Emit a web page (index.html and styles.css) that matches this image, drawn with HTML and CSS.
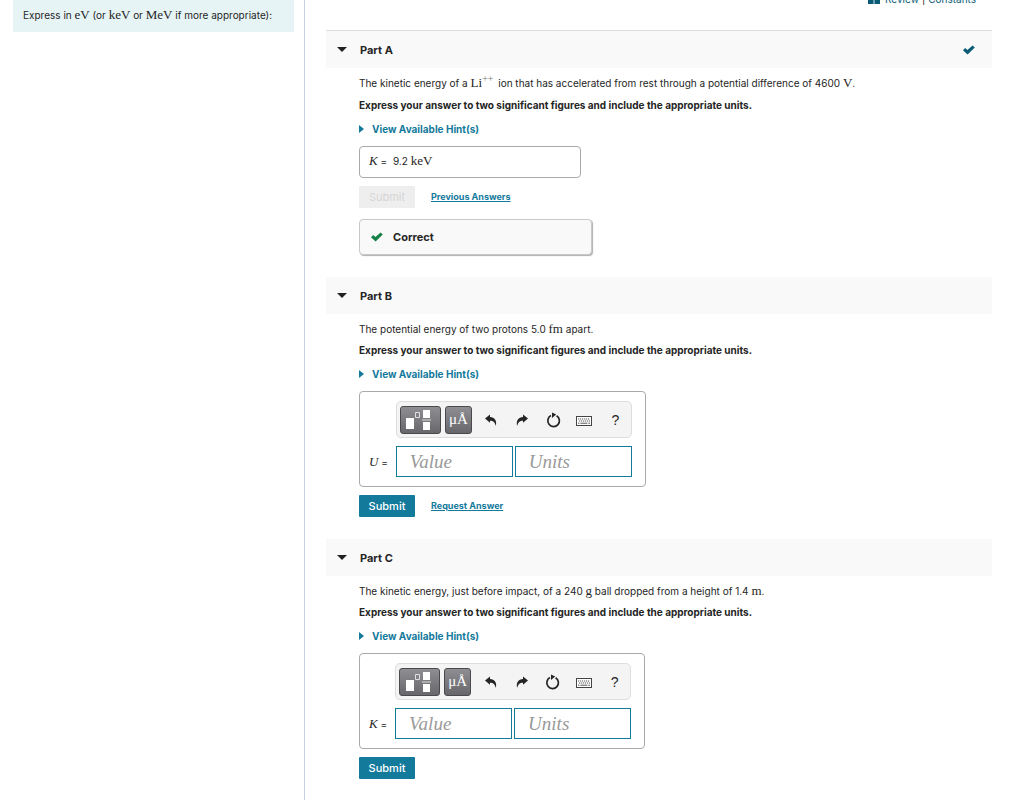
FILE: index.html
```
<!DOCTYPE html>
<html lang="en">
    <head>
        <meta charset="utf-8">
        <title>Kinetic and potential energy</title>
        <link rel="stylesheet" href="styles.css">
    </head>
    <body>

        <!-- shared icons -->
        <svg class="sprite" aria-hidden="true">
            <symbol id="check" viewBox="0 0 12 10"><path d="M0 5.2 2.2 3 4.4 5.1 9.6 0.4 11.8 2.6 4.6 9.4Z"/></symbol>
            <symbol id="undo" viewBox="0 0 12 12"><path d="M0 4.6 5 0.6V3C9.6 3 12 6.5 10.9 12 9.8 8.3 8.6 6.8 5 6.7V8.8Z"/></symbol>
            <symbol id="redo" viewBox="0 0 12 12"><path d="M12 4.6 7 0.6V3C2.4 3 0 6.5 1.1 12 2.2 8.3 3.4 6.8 7 6.7V8.8Z"/></symbol>
            <symbol id="reset" viewBox="0 0 15 16"><path d="M10.6 3.8A5.8 5.8 0 1 1 5 3.6" fill="none" stroke="currentColor" stroke-width="1.7"/><path d="M6 0.6V6L10.2 2.6Z"/></symbol>
            <symbol id="keyboard" viewBox="0 0 16 14"><rect x="0.5" y="3.5" width="15" height="9" fill="#fff" stroke="#444"/><path d="M2 6H14M3 8H14" fill="none" stroke="#555" stroke-dasharray="1.2 0.8"/><path d="M2 10.2H3.4M4.4 10.2H11.4M12.4 10.2H14" fill="none" stroke="#555"/></symbol>
            <symbol id="template" viewBox="1 0 28 22"><path d="M1 9H9V20H1ZM18 1H25V9H18ZM18 13H25V21H18Z" fill="#fff"/><path d="M10.5 3.5H14.5V8.5H10.5ZM17 11H26" fill="none" stroke="#e0e0e2"/></symbol>
        </svg>

        <div class="page">
            <aside class="problem">
                <p>Express in <span class="math">eV</span> (or <span class="math">keV</span> or <span class="math">MeV</span> if more appropriate):</p>
            </aside>

            <main class="parts">
                <nav class="review">
                    <svg class="book" viewBox="0 0 12 10" aria-hidden="true"><path d="M0 1 5.6 0V10H0ZM6.4 0 12 1V10H6.4Z"/></svg>
                    <a href="#">Review</a> | <a href="#">Constants</a>
                </nav>

                <section class="part">
                    <h2 class="first"><span class="caret"></span>Part A<svg class="check" aria-label="Completed"><use href="#check"/></svg></h2>
                    <div class="body">
                        <p class="question raised">The kinetic energy of a <span class="math">Li<sup>++</sup></span> ion that has accelerated from rest through a potential difference of 4600 <span class="math">V</span>.</p>
                        <p class="instruction">Express your answer to two significant figures and include the appropriate units.</p>
                        <a class="hints" href="#">View Available Hint(s)</a>
                        <div class="result"><i class="math">K</i> <span class="equals">=</span> 9.2 <span class="math">keV</span></div>
                        <div class="actions">
                            <button class="submit" disabled>Submit</button>
                            <a href="#">Previous Answers</a>
                        </div>
                        <div class="feedback"><svg class="check" aria-hidden="true"><use href="#check"/></svg>Correct</div>
                    </div>
                </section>

                <section class="part">
                    <h2><span class="caret"></span>Part B</h2>
                    <div class="body">
                        <p class="question">The potential energy of two protons 5.0 <span class="math">fm</span> apart.</p>
                        <p class="instruction">Express your answer to two significant figures and include the appropriate units.</p>
                        <a class="hints" href="#">View Available Hint(s)</a>
                        <div class="answer">
                            <div class="toolbar">
                                <button class="dark wide" aria-label="Templates"><svg><use href="#template"/></svg></button>
                                <button class="dark" aria-label="Symbols">μÅ</button>
                                <button aria-label="Undo"><svg class="arrow"><use href="#undo"/></svg></button>
                                <button aria-label="Redo"><svg class="arrow"><use href="#redo"/></svg></button>
                                <button aria-label="Reset"><svg class="reset"><use href="#reset"/></svg></button>
                                <button aria-label="Keyboard shortcuts"><svg class="keyboard"><use href="#keyboard"/></svg></button>
                                <button aria-label="Help">?</button>
                            </div>
                            <label for="b-value"><i class="math">U</i> <span class="equals">=</span></label>
                            <div class="fields">
                                <input id="b-value" placeholder="Value">
                                <input aria-label="Units" placeholder="Units">
                            </div>
                        </div>
                        <div class="actions">
                            <button class="submit">Submit</button>
                            <a href="#">Request Answer</a>
                        </div>
                    </div>
                </section>

                <section class="part">
                    <h2><span class="caret"></span>Part C</h2>
                    <div class="body">
                        <p class="question">The kinetic energy, just before impact, of a 240 <span class="math">g</span> ball dropped from a height of 1.4 <span class="math">m</span>.</p>
                        <p class="instruction">Express your answer to two significant figures and include the appropriate units.</p>
                        <a class="hints" href="#">View Available Hint(s)</a>
                        <div class="answer">
                            <div class="toolbar">
                                <button class="dark wide" aria-label="Templates"><svg><use href="#template"/></svg></button>
                                <button class="dark" aria-label="Symbols">μÅ</button>
                                <button aria-label="Undo"><svg class="arrow"><use href="#undo"/></svg></button>
                                <button aria-label="Redo"><svg class="arrow"><use href="#redo"/></svg></button>
                                <button aria-label="Reset"><svg class="reset"><use href="#reset"/></svg></button>
                                <button aria-label="Keyboard shortcuts"><svg class="keyboard"><use href="#keyboard"/></svg></button>
                                <button aria-label="Help">?</button>
                            </div>
                            <label for="c-value"><i class="math">K</i> <span class="equals">=</span></label>
                            <div class="fields">
                                <input id="c-value" placeholder="Value">
                                <input aria-label="Units" placeholder="Units">
                            </div>
                        </div>
                        <div class="actions">
                            <button class="submit">Submit</button>
                        </div>
                    </div>
                </section>
            </main>
        </div>

    </body>
</html>
```
FILE: styles.css
```
* { margin: 0; padding: 0; box-sizing: border-box; }
body { font-family: Inter, "Liberation Sans", Arial, sans-serif; font-size: 10px; line-height: 20px; color: #252525; background: #ffffff; }
a { color: #147a9c; font-weight: bold; }
svg { fill: currentColor; flex: none; }
.sprite { display: none; }
.math { font-family: "Liberation Serif", "Times New Roman", serif; font-size: 13px; line-height: 1; }
.math sup { font-size: 10px; line-height: 0; color: #777777; margin-right: 2px; }

.page { display: flex; min-height: 100vh; }
.problem { flex: 0 0 305px; padding: 0 10px 0 13px; border-right: 1px solid #c3d1e3; }
.problem p { background: #e6f4f5; padding: 5px 10px 7px; white-space: nowrap; }
.parts { flex: 1; padding: 0 32px 20px 21px; }

/* the bar is scrolled partly out of view */
.review { display: flex; align-items: center; justify-content: flex-end; gap: 3px; height: 20px; margin: -11px 16px 21px 0; }
.review a { font-weight: normal; text-decoration: none; color: #0a5c76; }
.review .book { width: 12px; height: 10px; margin-right: 2px; color: #0a5c76; }

.part { margin-bottom: 22px; }
.part h2 { display: flex; align-items: center; height: 37px; padding: 0 17px 0 11px; background: #f9f9f9; font-size: 11px; }
.part h2.first { height: 38px; border-top: 1px solid #dddddd; }
.part h2 .check { margin-left: auto; color: #0a5c76; }
.caret { border: 5px solid transparent; border-top-color: #222222; border-bottom: none; margin-right: 13px; }
.check { width: 12px; height: 10px; }

.body { padding: 5px 0 0 33px; }
.question { margin-bottom: 1px; }
.question.raised { line-height: 21px; }
.instruction { font-weight: bold; }
.hints { display: flex; align-items: center; width: fit-content; margin: 4px 0 7px; text-decoration: none; }
.hints::before { content: ""; border: 4px solid transparent; border-left: 5px solid #147a9c; border-right: none; margin-right: 8px; }

.result { width: 222px; height: 32px; padding: 4px 9px; border: 1px solid #aaaaaa; border-radius: 4px; }
.result .equals { margin-right: 3px; }
.equals { font-size: 10px; }
.actions { display: flex; align-items: center; gap: 16px; margin-top: 8px; }
.actions a { font-size: 9px; }
.submit { width: 56px; height: 22px; border: none; border-radius: 1px; background: #147a9c; color: #ffffff; font: 500 11px Inter, "Liberation Sans", Arial, sans-serif; }
.submit:disabled { background: #eeeeee; color: #d6d6d6; font-weight: normal; }
.feedback { display: flex; align-items: center; gap: 10px; width: 233px; height: 36px; margin-top: 11px; padding: 0 11px; background: #f9f9f9; border: 1px solid #c8c8c8; border-radius: 4px; box-shadow: 1px 1px 1px #b0b0b0; font-size: 11px; font-weight: bold; }
.feedback .check { color: #178044; }

.answer { display: grid; grid-template-columns: auto auto; align-items: center; gap: 8px; width: fit-content; padding: 9px 13px 9px 9px; border: 1px solid #aaaaaa; border-radius: 4px; }
.toolbar { grid-column: 2; display: flex; align-items: center; height: 37px; padding: 0 0 0 3px; background: #f4f4f4; border: 1px solid #dddddd; border-radius: 5px; }
.toolbar button { display: flex; align-items: center; justify-content: center; width: 31px; height: 28px; border: none; background: none; color: #252525; font: 14px "Liberation Sans", Arial, sans-serif; }
.toolbar .dark { width: 27px; margin-right: 4px; background: linear-gradient(#8e8e93, #68686c); border: 1px solid #4a4a4c; border-radius: 3px; color: #ffffff; font: 15px "Liberation Serif", serif; }
.toolbar .wide { width: 41px; }
.toolbar .wide svg { width: 28px; height: 22px; }
.toolbar .arrow { width: 12px; height: 12px; }
.toolbar .reset { width: 15px; height: 16px; }
.toolbar .keyboard { width: 16px; height: 14px; }
.fields { display: flex; gap: 2px; }
.fields input { width: 117px; height: 31px; padding: 0 13px; border: 1px solid #147a9c; background: #ffffff; font: italic 19px "Liberation Serif", serif; }
.fields input::placeholder { color: #999999; }
```
